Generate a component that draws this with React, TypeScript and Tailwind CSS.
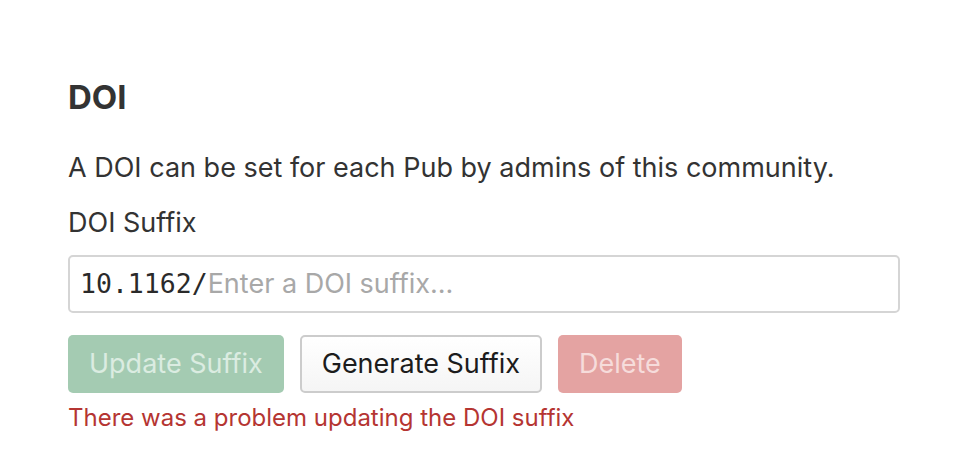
import React, { useState } from 'react';

const App: React.FC = () => {
  const [suffix, setSuffix] = useState('');

  return (
    <div className="w-[954px] h-[462px] bg-white pl-[68px] pr-[54px] pt-[77px] font-['Inter',sans-serif] text-[#333]">
      <h2 className="text-[33px] font-bold leading-[40px] mb-[35px]">DOI</h2>
      <p className="text-[27px] leading-[32px] mb-[23px]">A DOI can be set for each Pub by admins of this community.</p>
      <label className="block text-[27px] leading-[32px] mb-[16px]">DOI Suffix</label>
      <div className="flex items-center h-[58px] border-2 border-[#d5d5d5] rounded-[5px] px-[10px] mb-[22px]">
        <span className="font-['DejaVu_Sans_Mono',monospace] text-[26.5px] text-[#2a2a2a]">10.1162/</span>
        <input
          value={suffix}
          onChange={(e) => setSuffix(e.target.value)}
          placeholder="Enter a DOI suffix..."
          className="flex-1 min-w-0 outline-none text-[27px] text-[#333] placeholder:text-[#a8a8a8] bg-transparent"
        />
      </div>
      <div className="flex gap-[16px] mb-[11px]">
        <button disabled className="h-[58px] px-[21px] rounded-[5px] bg-[#a4cbb2] text-[#dbece1] text-[27px]">Update Suffix</button>
        <button className="h-[58px] px-[20px] rounded-[5px] border-2 border-[#cccccc] bg-gradient-to-b from-white to-[#f5f5f5] text-[#1c1c1c] text-[27px]">Generate Suffix</button>
        <button disabled className="h-[58px] px-[21px] rounded-[5px] bg-[#e4a3a2] text-[#f6dcdb] text-[27px]">Delete</button>
      </div>
      <p className="text-[24px] leading-[28px] text-[#b53532]">There was a problem updating the DOI suffix</p>
    </div>
  );
};

export default App;
